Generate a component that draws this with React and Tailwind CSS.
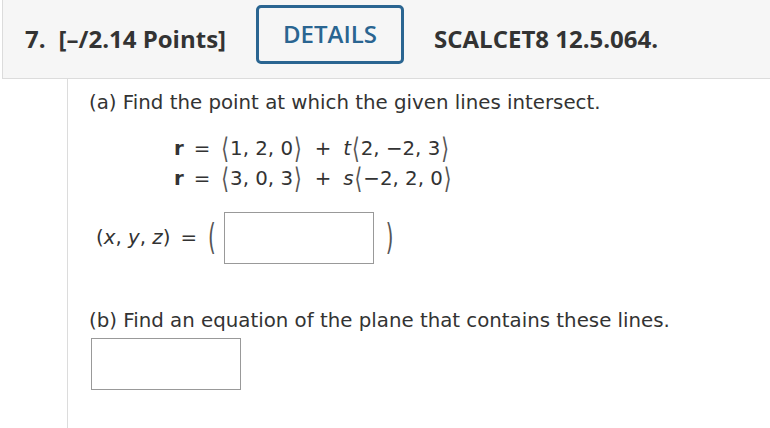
import React from "react";

function LA() {
  return <span className="inline-block scale-y-[1.45] mx-[1px] text-[#555]">⟨</span>;
}
function RA() {
  return <span className="inline-block scale-y-[1.45] mx-[1px] text-[#555]">⟩</span>;
}

export default function App() {
  const body = { fontFamily: '"DejaVu Sans", Verdana, sans-serif' };
  return (
    <div className="w-[770px] h-[428px] bg-white overflow-hidden relative">
      <div
        className="ml-[2px] h-[79px] bg-[#f6f6f6] border-l border-b border-[#dcdcdc] flex items-center text-[#333]"
        style={{ fontFamily: '"Open Sans", sans-serif' }}
      >
        <div className="pl-[22px] text-[24px] font-bold whitespace-pre">
          7.<span className="ml-[13px]">[–/2.14 Points]</span>
        </div>
        <div className="ml-[30px] mt-[-10px] w-[148px] h-[59px] border-[3px] border-[#2a6591] rounded-[5px] flex items-center justify-center text-[24px] font-semibold text-[#2a6591]">
          DETAILS
        </div>
        <div className="ml-[30px] text-[24px] font-bold">SCALCET8 12.5.064.</div>
      </div>
      <div className="flex h-[349px]">
        <div className="w-[68px] border-r border-[#dcdcdc] shrink-0" />
        <div className="pl-[21px] text-[#333]" style={body}>
          <p className="mt-[12px] text-[19.8px] leading-[24px]">
            (a) Find the point at which the given lines intersect.
          </p>
          <div className="ml-[85px] mt-[19px] text-[19.8px] leading-[30px] whitespace-nowrap">
            <div>
              <b>r</b>
              <span className="mx-[10px]">=</span>
              <LA />1, 2, 0<RA />
              <span className="mx-[12px]">+</span>
              <i>t</i>
              <LA />2, −2, 3<RA />
            </div>
            <div>
              <b>r</b>
              <span className="mx-[10px]">=</span>
              <LA />3, 0, 3<RA />
              <span className="mx-[12px]">+</span>
              <i>s</i>
              <LA />−2, 2, 0<RA />
            </div>
          </div>
          <div className="mt-[18px] flex items-center text-[19.8px]">
            <span className="ml-[7px]">
              (<i>x</i>, <i>y</i>, <i>z</i>)
            </span>
            <span className="ml-[10px]">=</span>
            <span className="ml-[11px] inline-block scale-y-[1.8] text-[#555]">(</span>
            <div className="ml-[8px] w-[150px] h-[52px] border border-[#999] bg-white" />
            <span className="ml-[12px] inline-block scale-y-[1.8] text-[#555]">)</span>
          </div>
          <p className="mt-[45px] text-[19.8px] leading-[24px]">
            (b) Find an equation of the plane that contains these lines.
          </p>
          <div className="mt-[5px] ml-[2px] w-[150px] h-[52px] border border-[#999] bg-white" />
        </div>
      </div>
    </div>
  );
}
